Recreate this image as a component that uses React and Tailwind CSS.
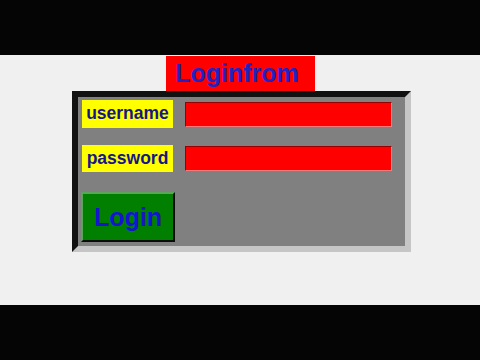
const LoginForm = () => {
  const labelClass =
    "w-[91px] bg-[#ffff00] text-[#16168a] font-bold text-[17.5px] leading-none flex items-center justify-center";
  const inputClass =
    "w-[207px] h-[25px] bg-[#ff0000] border border-t-[#9a0000] border-l-[#9a0000] border-r-[#ff7a7a] border-b-[#ff7a7a] outline-none";

  return (
    <div
      className="w-[480px] h-[360px] bg-[#050505] flex flex-col"
      style={{ fontFamily: '"Liberation Sans", Arial, sans-serif' }}
    >
      <div className="h-[55px]"></div>
      <main className="h-[250px] bg-[#f0f0f0] pt-[1px] flex flex-col">
        <div className="ml-[166px] w-[149px] h-[35px] bg-[#ff0000] flex items-center justify-center pr-[7px]">
          <h1 className="text-[25px] font-bold text-[#2222c4] leading-none">Loginfrom</h1>
        </div>
        <div className="ml-[72px] w-[339px] h-[161px] border-[6px] border-t-[#111111] border-l-[#111111] border-r-[#c6c6c6] border-b-[#c6c6c6] bg-[#808080] pl-[4px] pt-[3px] flex flex-col">
          <div className="flex items-center gap-[12px]">
            <label className={`${labelClass} h-[28px]`}>username</label>
            <input type="text" className={inputClass} />
          </div>
          <div className="flex items-center gap-[12px] mt-[17px]">
            <label className={`${labelClass} h-[27px]`}>password</label>
            <input type="password" className={inputClass} />
          </div>
          <button
            type="button"
            className="mt-[20px] ml-[-1px] w-[94px] h-[50px] bg-[#007f00] border-2 border-t-[#5aa55a] border-l-[#5aa55a] border-r-[#0a0a0a] border-b-[#0a0a0a] text-[#1414d2] text-[25px] font-bold leading-none flex items-center justify-center"
          >
            Login
          </button>
        </div>
      </main>
      <div className="flex-1"></div>
    </div>
  );
};

export default function App() {
  return <LoginForm />;
}
